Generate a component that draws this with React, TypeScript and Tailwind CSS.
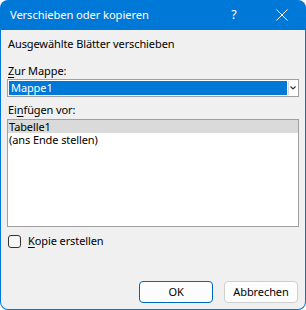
import React from "react";

export default function App() {
  return (
    <div
      className="w-[306px] h-[310px] bg-white text-[11px] leading-[16px] tracking-[-0.1px] text-black"
      style={{ fontFamily: '"Noto Sans", "Open Sans", sans-serif' }}
    >
      <div className="w-[306px] h-[310px] rounded-[8px] overflow-hidden flex flex-col bg-[#0078d7]">
        {/* Title bar */}
        <div className="h-[30px] shrink-0 flex items-center text-white pl-[10px]">
          <div className="flex-1 text-[11.2px] pb-[1px]">Verschieben oder kopieren</div>
          <div className="w-[12px] text-[12.5px] mr-[36px] text-center">?</div>
          <svg width="12" height="12" viewBox="0 0 12 12" className="mr-[18px]">
            <path d="M0.5 0.5 L11.5 11.5 M11.5 0.5 L0.5 11.5" stroke="white" strokeWidth="1" />
          </svg>
        </div>
        {/* Body */}
        <div className="flex-1 mx-[1px] mb-[1px] rounded-b-[7px] bg-[#f0f0f0] flex flex-col px-[6px] pt-[6px]">
          <div className="pl-[1px]">Ausgewählte Blätter verschieben</div>
          <div className="pl-[1px] mt-[11px]">
            <span className="underline underline-offset-[2px]">Z</span>ur Mappe:
          </div>
          <div className="h-[18px] border border-[#a0a0a0] bg-white flex p-[1px]">
            <div className="flex-1 bg-[#0078d7] text-white pl-[2px] leading-[14px] h-[14px]">Mappe1</div>
            <div className="w-[1px] bg-[#d9d9d9] ml-[1px]" />
            <div className="w-[8px] flex items-center justify-center">
              <svg width="6" height="4" viewBox="0 0 6 4">
                <path d="M0.5 0.5 L3 3 L5.5 0.5" stroke="#333" strokeWidth="1.2" fill="none" />
              </svg>
            </div>
          </div>
          <div className="pl-[1px] mt-[5px]">
            Ei<span className="underline underline-offset-[2px]">n</span>fügen vor:
          </div>
          <div className="mt-[1px] h-[108px] border border-[#a0a0a0] bg-white flex flex-col">
            <div className="h-[13px] leading-[13px] bg-[#dadada] pl-[1px]">Tabelle1</div>
            <div className="h-[13px] leading-[13px] pl-[1px]">(ans Ende stellen)</div>
          </div>
          <div className="mt-[6px] flex items-center">
            <div className="w-[13px] h-[13px] ml-[1px] border border-[#333333] rounded-[3px] bg-[#f7f7f7]" />
            <div className="ml-[7px]">
              <span className="underline underline-offset-[2px]">K</span>opie erstellen
            </div>
          </div>
          <div className="flex-1" />
          <div className="flex justify-end gap-[11px] mb-[6px] mr-[1px]">
            <div className="w-[74px] h-[22px] rounded-[4px] border border-[#0067c0] bg-[#fdfdfd] flex items-center justify-center">
              OK
            </div>
            <div className="w-[74px] h-[22px] rounded-[4px] border border-[#d0d0d0] bg-[#fdfdfd] flex items-center justify-center">
              Abbrechen
            </div>
          </div>
        </div>
      </div>
    </div>
  );
}
